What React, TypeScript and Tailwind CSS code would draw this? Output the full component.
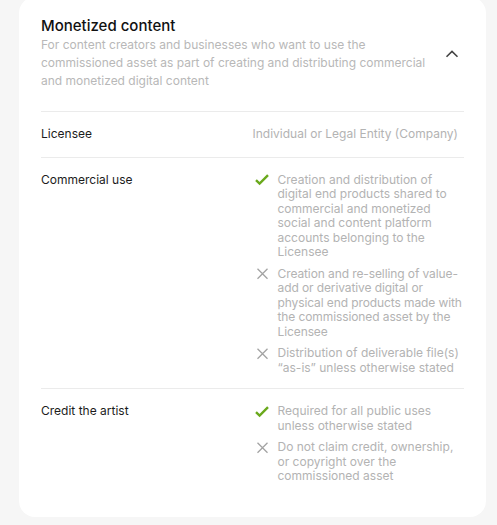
import React from "react";

const Check = () => (
  <svg width="16" height="14" viewBox="0 0 16 14" className="shrink-0 mt-[0.5px]">
    <path d="M3 7.2 L6.6 10.6 L15 2.2" fill="none" stroke="#6aa91c" strokeWidth="2.4" strokeLinecap="butt" strokeLinejoin="miter" />
  </svg>
);

const Cross = () => (
  <svg width="16" height="14" viewBox="0 0 16 14" className="shrink-0 mt-[0.5px]">
    <path d="M4.5 1.8 L14.5 11.8 M14.5 1.8 L4.5 11.8" fill="none" stroke="#a3a3a3" strokeWidth="1.3" />
  </svg>
);

type Item = { ok: boolean; text: string; tight?: boolean };

const Row = ({ label, items }: { label: string; items: Item[] }) => (
  <div className="grid grid-cols-2 border-b border-[#ebebeb] pt-[15px] pb-[13px] last:border-b-0">
    <div className="text-[12px] leading-[14.5px] text-[#1c1c1c]">{label}</div>
    <div className="flex flex-col gap-[7px]">
      {items.map((it, i) => (
        <div key={i} className="flex items-start gap-[9px]">
          {it.ok ? <Check /> : <Cross />}
          <span className={it.tight ? "text-[12px] leading-[14.5px] tracking-[-0.1px] text-[#b3b3b3]" : "text-[12px] leading-[14.5px] text-[#b3b3b3]"}>
            {it.text}
          </span>
        </div>
      ))}
    </div>
  </div>
);

export default function App() {
  return (
    <div className="min-h-screen bg-[#f6f6f6] pl-[19px] pr-[11px] pb-2 font-['Inter',sans-serif]">
      <div className="-mt-[3px] rounded-2xl bg-white px-[22px] pt-[20px] pb-[20px]">
        <div className="flex items-center justify-between border-b border-[#ebebeb] pb-[21px]">
          <div className="w-[395px]">
            <h3 className="text-[15px] font-medium leading-[18px] text-[#111]">Monetized content</h3>
            <p className="mt-[1px] text-[12px] leading-[18px] text-[#b8b8b8]">
              For content creators and businesses who want to use the commissioned asset as part of creating and distributing commercial and monetized digital content
            </p>
          </div>
          <svg width="14" height="14" viewBox="0 0 14 14" className="mr-[5px]">
            <path d="M1.5 9.8 L7 4.4 L12.5 9.8" fill="none" stroke="#444" strokeWidth="1.6" />
          </svg>
        </div>

        <div className="grid grid-cols-2 border-b border-[#ebebeb] py-[15px]">
          <div className="text-[12px] leading-[14.5px] text-[#1c1c1c]">Licensee</div>
          <div className="text-[12px] leading-[14.5px] text-[#b3b3b3]">Individual or Legal Entity (Company)</div>
        </div>

        <Row
          label="Commercial use"
          items={[
            { ok: true, text: "Creation and distribution of digital end products shared to commercial and monetized social and content platform accounts belonging to the Licensee" },
            { ok: false, tight: true, text: "Creation and re-selling of value-add or derivative digital or physical end products made with the commissioned asset by the Licensee" },
            { ok: false, text: "Distribution of deliverable file(s) “as-is” unless otherwise stated" },
          ]}
        />
        <Row
          label="Credit the artist"
          items={[
            { ok: true, text: "Required for all public uses unless otherwise stated" },
            { ok: false, text: "Do not claim credit, ownership, or copyright over the commissioned asset" },
          ]}
        />
      </div>
    </div>
  );
}
